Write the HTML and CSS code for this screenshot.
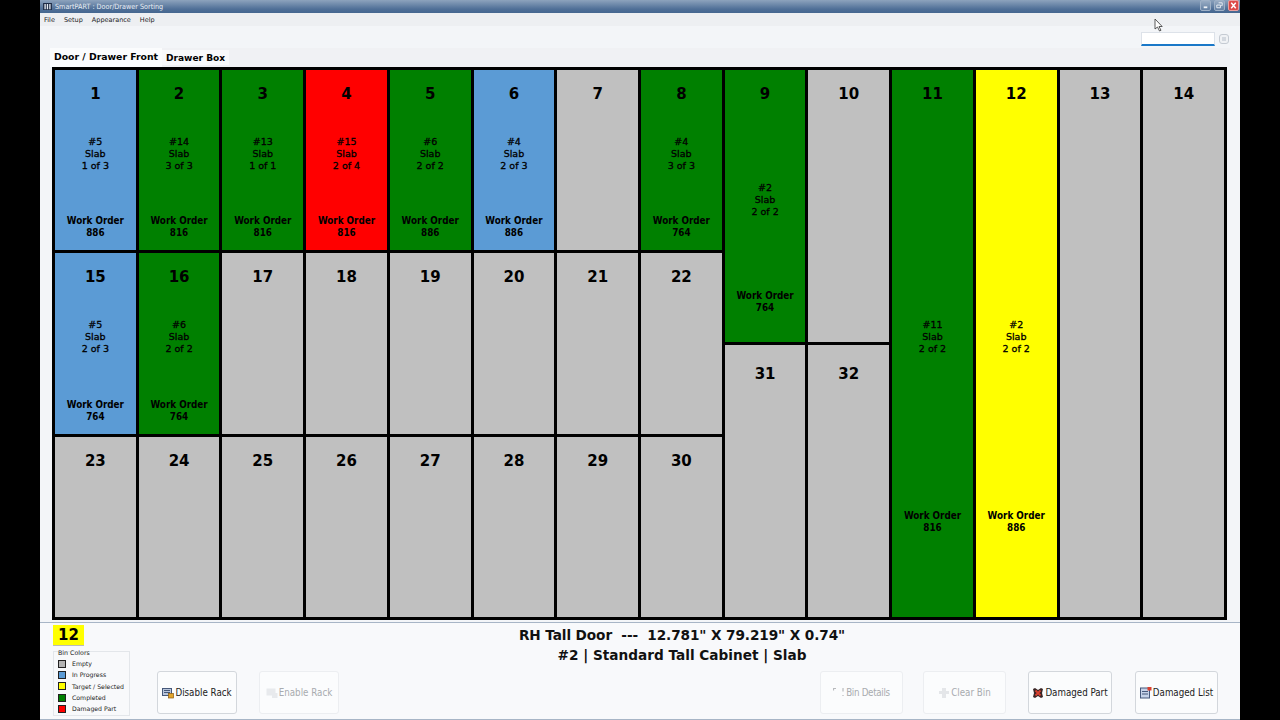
FILE: index.html
```html
<!DOCTYPE html>
<html lang="en">
<head>
<meta charset="utf-8">
<title>SmartPART : Door/Drawer Sorting</title>
<link rel="stylesheet" href="styles.css">
</head>
<body>
<div class="window">
  <header class="titlebar">
    <div class="title-left">
      <svg class="app-icon" viewBox="0 0 10 8"><rect width="10" height="8" fill="#1c2a44"/><path d="M1.5 1h1.500v6H1.500zM4.200 1h1.500v6H4.200zM7 1h1.500v6H7z" fill="#e8edf4"/></svg>
      <span>SmartPART : Door/Drawer Sorting</span>
    </div>
    <div class="win-controls">
      <span class="win-btn"><svg viewBox="0 0 10 8"><rect x="3" y="5" width="4" height="2" fill="#eef2f7"/></svg></span>
      <span class="win-btn"><svg viewBox="0 0 10 8"><path d="M4 1h4v3H7M2 3.500h4v3H2z" fill="none" stroke="#eef2f7"/></svg></span>
      <span class="win-btn win-close"><svg viewBox="0 0 10 8"><path d="M2.500 1l5 6M7.500 1l-5 6" stroke="#fff" stroke-width="1.600"/></svg></span>
    </div>
  </header>
  <nav class="menubar"><span>File</span><span>Setup</span><span>Appearance</span><span>Help</span></nav>
  <div class="search-row">
    <div class="search-input"></div>
    <div class="search-btn"><i class="search-dot"></i></div>
  </div>
  <div class="tabs">
    <span class="tab tab-active">Door / Drawer Front</span>
    <span class="tab">Drawer Box</span>
  </div>
  <main class="rack">
    <div class="bin blue"><b class="num">1</b><p class="detail">#5<br>Slab<br>1 of 3</p><p class="order">Work Order<br>886</p></div>
    <div class="bin green"><b class="num">2</b><p class="detail">#14<br>Slab<br>3 of 3</p><p class="order">Work Order<br>816</p></div>
    <div class="bin green"><b class="num">3</b><p class="detail">#13<br>Slab<br>1 of 1</p><p class="order">Work Order<br>816</p></div>
    <div class="bin red"><b class="num">4</b><p class="detail">#15<br>Slab<br>2 of 4</p><p class="order">Work Order<br>816</p></div>
    <div class="bin green"><b class="num">5</b><p class="detail">#6<br>Slab<br>2 of 2</p><p class="order">Work Order<br>886</p></div>
    <div class="bin blue"><b class="num">6</b><p class="detail">#4<br>Slab<br>2 of 3</p><p class="order">Work Order<br>886</p></div>
    <div class="bin"><b class="num">7</b></div>
    <div class="bin green"><b class="num">8</b><p class="detail">#4<br>Slab<br>3 of 3</p><p class="order">Work Order<br>764</p></div>
    <div class="bin bin-half green"><b class="num">9</b><p class="detail">#2<br>Slab<br>2 of 2</p><p class="order">Work Order<br>764</p></div>
    <div class="bin bin-half"><b class="num">10</b></div>
    <div class="bin bin-full green"><b class="num">11</b><p class="detail">#11<br>Slab<br>2 of 2</p><p class="order">Work Order<br>816</p></div>
    <div class="bin bin-full yellow"><b class="num">12</b><p class="detail">#2<br>Slab<br>2 of 2</p><p class="order">Work Order<br>886</p></div>
    <div class="bin bin-full"><b class="num">13</b></div>
    <div class="bin bin-full"><b class="num">14</b></div>
    <div class="bin blue"><b class="num">15</b><p class="detail">#5<br>Slab<br>2 of 3</p><p class="order">Work Order<br>764</p></div>
    <div class="bin green"><b class="num">16</b><p class="detail">#6<br>Slab<br>2 of 2</p><p class="order">Work Order<br>764</p></div>
    <div class="bin"><b class="num">17</b></div>
    <div class="bin"><b class="num">18</b></div>
    <div class="bin"><b class="num">19</b></div>
    <div class="bin"><b class="num">20</b></div>
    <div class="bin"><b class="num">21</b></div>
    <div class="bin"><b class="num">22</b></div>
    <div class="bin bin-half bin-lower"><b class="num">31</b></div>
    <div class="bin bin-half bin-lower"><b class="num">32</b></div>
    <div class="bin"><b class="num">23</b></div>
    <div class="bin"><b class="num">24</b></div>
    <div class="bin"><b class="num">25</b></div>
    <div class="bin"><b class="num">26</b></div>
    <div class="bin"><b class="num">27</b></div>
    <div class="bin"><b class="num">28</b></div>
    <div class="bin"><b class="num">29</b></div>
    <div class="bin"><b class="num">30</b></div>
  </main>
  <footer class="panel">
    <div class="panel-left">
      <div class="selected">12</div>
      <div class="legend">
        <div class="legend-title">Bin Colors</div>
        <div class="legend-row"><i class="swatch grey"></i>Empty</div>
        <div class="legend-row"><i class="swatch blue"></i>In Progress</div>
        <div class="legend-row"><i class="swatch yellow"></i>Target / Selected</div>
        <div class="legend-row"><i class="swatch green"></i>Completed</div>
        <div class="legend-row"><i class="swatch red"></i>Damaged Part</div>
      </div>
    </div>
    <div class="panel-main">
      <div class="part-info">
        <div class="part-size">RH Tall Door&nbsp; --- &nbsp;12.781" X 79.219" X 0.74"</div>
        <div>#2 | Standard Tall Cabinet | Slab</div>
      </div>
      <div class="actions">
        <div class="action-group group-left">
          <button class="action">
            <svg class="ico" viewBox="0 0 12 12"><rect x="0.500" y="1.500" width="9" height="7" fill="#b9c6dc" stroke="#46587a"/><rect x="2" y="3" width="6" height="1" fill="#46587a"/><rect x="2" y="5" width="6" height="1" fill="#46587a"/><rect x="6.500" y="6.500" width="5" height="4.500" fill="#e2a52c" stroke="#8a5a10" stroke-width=".7"/></svg>Disable Rack</button>
          <button class="action" disabled>
            <svg class="ico" viewBox="0 0 12 12"><rect x="0.500" y="1.500" width="9" height="7" fill="#e8eaed"/><rect x="6" y="6" width="5.500" height="5" fill="#e8eaed"/></svg>Enable Rack</button>
        </div>
        <div class="action-group group-right">
          <button class="action action-wide action-tight" disabled>
            <svg class="ico" viewBox="0 0 12 12"><path d="M0.500 3.500V1.500H3M9.500 1.500h.5v3M10 8v1" fill="none" stroke="#b8babd" stroke-width="1.200"/></svg>Bin Details</button>
          <button class="action action-wide" disabled>
            <svg class="ico" viewBox="0 0 12 12"><path d="M4 1h4v3h3v3H8v4H4V7H1V4h3z" fill="#e4e6e9"/></svg>Clear Bin</button>
          <button class="action action-wide action-gap">
            <svg class="ico" viewBox="0 0 12 12"><path d="M1 2l2-1 3 2 3-2 2 1-1 4 1 4-2 1-3-2-3 2-2-1 1-4z" fill="#3a2626"/><path d="M3.500 3.500l5 5M8.500 3.500l-5 5" stroke="#d9402f" stroke-width="1.800"/></svg>Damaged Part</button>
          <button class="action action-wide action-gap-last">
            <svg class="ico" viewBox="0 0 12 12"><rect x="0.500" y="1" width="9" height="10" fill="#c5d2e8" stroke="#45577a"/><rect x="2" y="4" width="6" height="1" fill="#45577a"/><rect x="2" y="6.500" width="6" height="1" fill="#45577a"/><path d="M7.500 0h4v3.500h-4z" fill="#d9402f"/></svg>Damaged List</button>
        </div>
      </div>
    </div>
  </footer>
  <svg class="cursor" viewBox="0 0 10 14"><path d="M1 1v10l2.500-2 2 4 1.500-.7-2-3.800h3.200z" fill="#fff" stroke="#333" stroke-width=".8"/></svg>
</div>
</body>
</html>
```
FILE: styles.css
```css
* { box-sizing: border-box; }
html, body { margin: 0; height: 100%; background: #000; }
body { display: flex; justify-content: center; overflow: hidden; }
.window {
  position: relative;
  width: 1200px;
  height: 720px;
  display: flex;
  flex-direction: column;
  background: #f3f5f8;
  font-family: "DejaVu Sans", sans-serif;
  color: #000;
}
.titlebar {
  height: 13px;
  display: flex;
  justify-content: space-between;
  background: linear-gradient(#8da3bd, #4f6f97 70%, #456790);
  color: #e9eef4;
  font: 7.200px/13px "DejaVu Sans Condensed", "DejaVu Sans", sans-serif;
}
.title-left { display: flex; align-items: center; gap: 3px; padding-left: 3px; }
.app-icon { width: 9px; height: 7px; }
.win-controls { display: flex; gap: 3px; padding-right: 1px; }
.win-btn {
  width: 11px; height: 11px;
  border: 1px solid #9fb1c7;
  border-radius: 2px;
  background: rgba(255,255,255,.15);
  display: flex;
}
.win-btn svg { width: 100%; height: 100%; }
.win-close { background: #dd4a48; border-color: #e9a0a0; }
.menubar {
  height: 13px;
  display: flex;
  gap: 9px;
  padding-left: 4px;
  background: #edeff2;
  font: 6.500px/14px "DejaVu Sans", sans-serif;
  color: #222;
}
.search-row {
  height: 22px;
  display: flex;
  justify-content: flex-end;
  align-items: flex-start;
  padding: 6px 11px 0 0;
  gap: 4px;
}
.search-input {
  width: 74px; height: 14px;
  background: #fff;
  border: 1px solid #dde2e9;
  border-bottom: 2px solid #1a78c8;
}
.search-btn {
  width: 10px; height: 10px;
  margin-top: 2px;
  padding: 2px;
  border: 1px solid #c5cbd3;
  border-radius: 3px;
  background: #f0f2f5;
  display: flex;
}
.search-dot { flex: 1; background: #d3d8df; }
.tabs {
  height: 19px;
  margin: 0 10px;
  background: #f0f1f4;
  display: flex;
  align-items: flex-start;
  font: bold 9.050px/16px "DejaVu Sans", sans-serif;
}
.tab { padding: 0 4px; background: #f8f9fb; height: 15px; margin-top: 2px; white-space: nowrap; }
.tab-active { height: 19px; line-height: 18px; margin-top: 0; background: #fbfcfd; font-size: 9.300px; }
.rack {
  width: 1175px;
  height: 553px;
  margin-left: 12px;
  padding: 3px;
  background: #000;
  display: grid;
  grid-template-columns: repeat(14, 1fr);
  grid-template-rows: repeat(6, 1fr);
  gap: 3px;
  flex: none;
}
.bin {
  grid-row: span 2;
  min-width: 0;
  display: flex;
  flex-direction: column;
  align-items: center;
  background: #c0c0c0;
  text-align: center;
  font: bold 9.800px/12px "DejaVu Sans Condensed", "DejaVu Sans", sans-serif;
}
.bin-half { grid-row: span 3; }
.bin-full { grid-row: span 6; }
.num { display: block; height: 48px; font: bold 15px/48px "DejaVu Sans", sans-serif; }
.bin-lower { padding-top: 5px; }
.detail { margin: 18px 0 0; font: 9.500px/12px "DejaVu Sans", sans-serif; -webkit-text-stroke: 0.3px #000; }
.order { margin: auto 0 11px; }
.bin-half .detail { margin-top: 64px; }
.bin-half .order { margin-bottom: 28px; }
.bin-full .detail { margin-top: 201px; }
.bin-full .order { margin-bottom: 83px; }
.blue { background: #5b9bd5; }
.green { background: #008000; }
.red { background: #ff0000; }
.yellow { background: #ffff00; }
.grey { background: #b4b4b4; }
.panel {
  flex: 1;
  margin-top: 2px;
  display: flex;
  background: #f8f9fb;
  border-top: 1px solid #a7b5c6;
  border-bottom: 1px solid #a7b5c6;
  padding: 2px 6px 0 13px;
}
.panel-left { width: 77px; flex: none; display: flex; flex-direction: column; }
.selected {
  width: 31px; height: 21px;
  background: #ffff00;
  border-bottom: 1px solid #bbb;
  font: bold 15px/21px "DejaVu Sans", sans-serif;
  text-align: center;
}
.legend {
  margin: 5px 0 0;
  padding: 0 0 0 4px;
  width: 77px;
  height: 65px;
  border: 1px solid #e3e6ea;
  background: #f8f9fb;
}
.legend-title { font: 6.300px/7px "DejaVu Sans", sans-serif; margin: -3px 0 0 0; color: #222; }
.legend-row {
  display: flex;
  align-items: center;
  gap: 6px;
  height: 11.300px;
  font: 6.200px/11px "DejaVu Sans", sans-serif;
  color: #222;
}
.legend-title + .legend-row { margin-top: 2px; }
.swatch { width: 8px; height: 8px; border: 1px solid #222; }
.panel-main { flex: 1; display: flex; flex-direction: column; }
.part-info {
  text-align: center;
  font: bold 13.650px/20px "DejaVu Sans", sans-serif;
  color: #111;
}
.part-size { letter-spacing: -0.1px; }
.actions { display: flex; justify-content: space-between; margin-top: 6px; padding-right: 16px; }
.action-group { display: flex; }
.group-left { padding-left: 27px; gap: 22px; }
.group-right { gap: 20px; }
.action {
  width: 80px; height: 43px;
  display: flex;
  align-items: center;
  justify-content: center;
  gap: 1px;
  padding: 1px 0 0;
  background: #fbfcfd;
  border: 1px solid #d3d7dc;
  border-radius: 3px;
  font: 9.700px/12px "DejaVu Sans Condensed", "DejaVu Sans", sans-serif;
  color: #222;
  white-space: nowrap;
}
.action-wide { width: 83px; }
.action-tight { letter-spacing: -0.3px; }
.action-gap { margin-left: 2px; width: 84px; }
.action-gap-last { margin-left: 3px; }
.action:disabled { border-color: #eceef1; color: #a8abaf; }
.ico { width: 12px; height: 12px; flex: none; }
.cursor { position: absolute; left: 1114px; top: 18px; width: 10px; height: 14px; }
```
